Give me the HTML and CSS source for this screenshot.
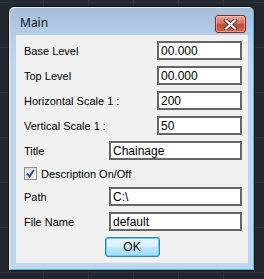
FILE: index.html
```html
<!DOCTYPE html>
<html lang="en">
<head>
    <meta charset="UTF-8">
    <title>Main</title>
    <link rel="stylesheet" href="styles.css">
</head>
<body>
    <div class="window">
        <div class="titlebar">
            <span class="caption">Main</span>
            <button class="close" title="Close">
                <svg width="17" height="11" viewBox="0 0 17 11">
                    <path d="M4 1.5 L13 9.5 M13 1.5 L4 9.5" stroke="#5a2a25" stroke-width="4" stroke-linecap="square"/>
                    <path d="M4 1.5 L13 9.5 M13 1.5 L4 9.5" stroke="#ffffff" stroke-width="2.2" stroke-linecap="square"/>
                </svg>
            </button>
        </div>

        <div class="client">
            <div class="row">
                <label>Base Level</label>
                <input class="field short" type="text" value="00.000">
            </div>
            <div class="row">
                <label>Top Level</label>
                <input class="field short" type="text" value="00.000">
            </div>
            <div class="row">
                <label>Horizontal Scale 1 :</label>
                <input class="field short" type="text" value="200">
            </div>
            <div class="row">
                <label>Vertical Scale 1 :</label>
                <input class="field short" type="text" value="50">
            </div>
            <div class="row">
                <label>Title</label>
                <input class="field long" type="text" value="Chainage">
            </div>
            <div class="check-row">
                <span class="checkbox">
                    <svg width="9" height="9" viewBox="0 0 9 9">
                        <path d="M1 4.5 L3.5 7.5 L8 1" fill="none" stroke="#2a4f9a" stroke-width="2"/>
                    </svg>
                </span>
                <span>Description On/Off</span>
            </div>
            <div class="row">
                <label>Path</label>
                <input class="field long" type="text" value="C:\">
            </div>
            <div class="row">
                <label>File Name</label>
                <input class="field long" type="text" value="default">
            </div>
            <div class="buttons">
                <button class="ok">OK</button>
            </div>
        </div>
    </div>
</body>
</html>
```

FILE: styles.css
```css
:root {
    --desk:       #22272f;
    --deskLine:   #2e333c;
    --frame:      #bfd5ec;
    --frameTop:   #a3bcd8;
    --client:     #f0f0f0;
    --fieldLine:  #666666;
}

body {
    margin: 0;
    height: 279px;
    overflow: hidden;
    background-color: var(--desk);
    background-image:
        linear-gradient(to right, var(--deskLine) 1px, transparent 1px),
        linear-gradient(to bottom, var(--deskLine) 1px, transparent 1px);
    background-size: 45px 45px;
    background-position: -2px 2px;
    font-family: "Liberation Sans", Arial, sans-serif;
    font-size: 11px;
    color: #000;
}

.window {
    box-sizing: border-box;
    width: 247px;
    height: 265px;
    margin: 6px 0 0 8px;
    border: 1px solid #0e1114;
    border-radius: 6px 6px 0 0;
    background: linear-gradient(to bottom, var(--frameTop) 0px, #b8cfe8 30px, var(--frame) 60px);
    box-shadow: inset 1px 1px 0 rgba(255, 255, 255, 0.7), inset -1px -1px 0 #3fc6e8;
    display: flex;
    flex-direction: column;
}

.titlebar {
    height: 28px;
    display: flex;
    align-items: center;
    justify-content: space-between;
    padding: 0 8px 0 11px;
}

.caption {
    font-family: "Noto Sans", "Open Sans", sans-serif;
    font-size: 12px;
    color: #111;
    margin-top: 3px;
}

.close {
    box-sizing: border-box;
    width: 31px;
    height: 18px;
    margin-top: 6px;
    padding: 0;
    border: 1px solid #7a2e26;
    border-radius: 3px;
    background: linear-gradient(to bottom, #e9a796 0%, #d47461 45%, #c04a32 55%, #cf6a50 100%);
    box-shadow: inset 0 0 0 1px rgba(255, 220, 210, 0.45);
    display: flex;
    align-items: center;
    justify-content: center;
}

.client {
    flex: 1;
    margin: 0 6px 7px 7px;
    padding: 6px 6px 0 8px;
    background: var(--client);
    display: flex;
    flex-direction: column;
    gap: 6px;
}

.row {
    height: 19px;
    display: flex;
    align-items: center;
    justify-content: space-between;
}

.field {
    box-sizing: border-box;
    height: 19px;
    padding: 0 2px;
    border: 2px solid var(--fieldLine);
    background: #fff;
    font-family: "Liberation Sans", Arial, sans-serif;
    font-size: 12px;
    color: #000;
    outline: none;
}

.short {
    width: 85px;
}

.long {
    width: 133px;
}

.check-row {
    height: 15px;
    display: flex;
    align-items: center;
    gap: 4px;
}

.checkbox {
    box-sizing: border-box;
    width: 13px;
    height: 13px;
    border: 1px solid #8e8f8f;
    background: linear-gradient(135deg, #dcdcdc, #fbfbfb);
    display: flex;
    align-items: center;
    justify-content: center;
}

.buttons {
    display: flex;
    justify-content: center;
    padding-right: 2px;
}

.ok {
    box-sizing: border-box;
    width: 55px;
    height: 20px;
    border: 1px solid #3c7fb1;
    border-radius: 3px;
    background: linear-gradient(to bottom, #eaf6fd 0%, #d9f0fc 45%, #bee6fd 55%, #a7d9f5 100%);
    box-shadow: inset 0 0 0 1px #5fd0f4;
    font-family: "Liberation Sans", Arial, sans-serif;
    font-size: 12px;
    color: #000;
    padding: 0;
}
```
